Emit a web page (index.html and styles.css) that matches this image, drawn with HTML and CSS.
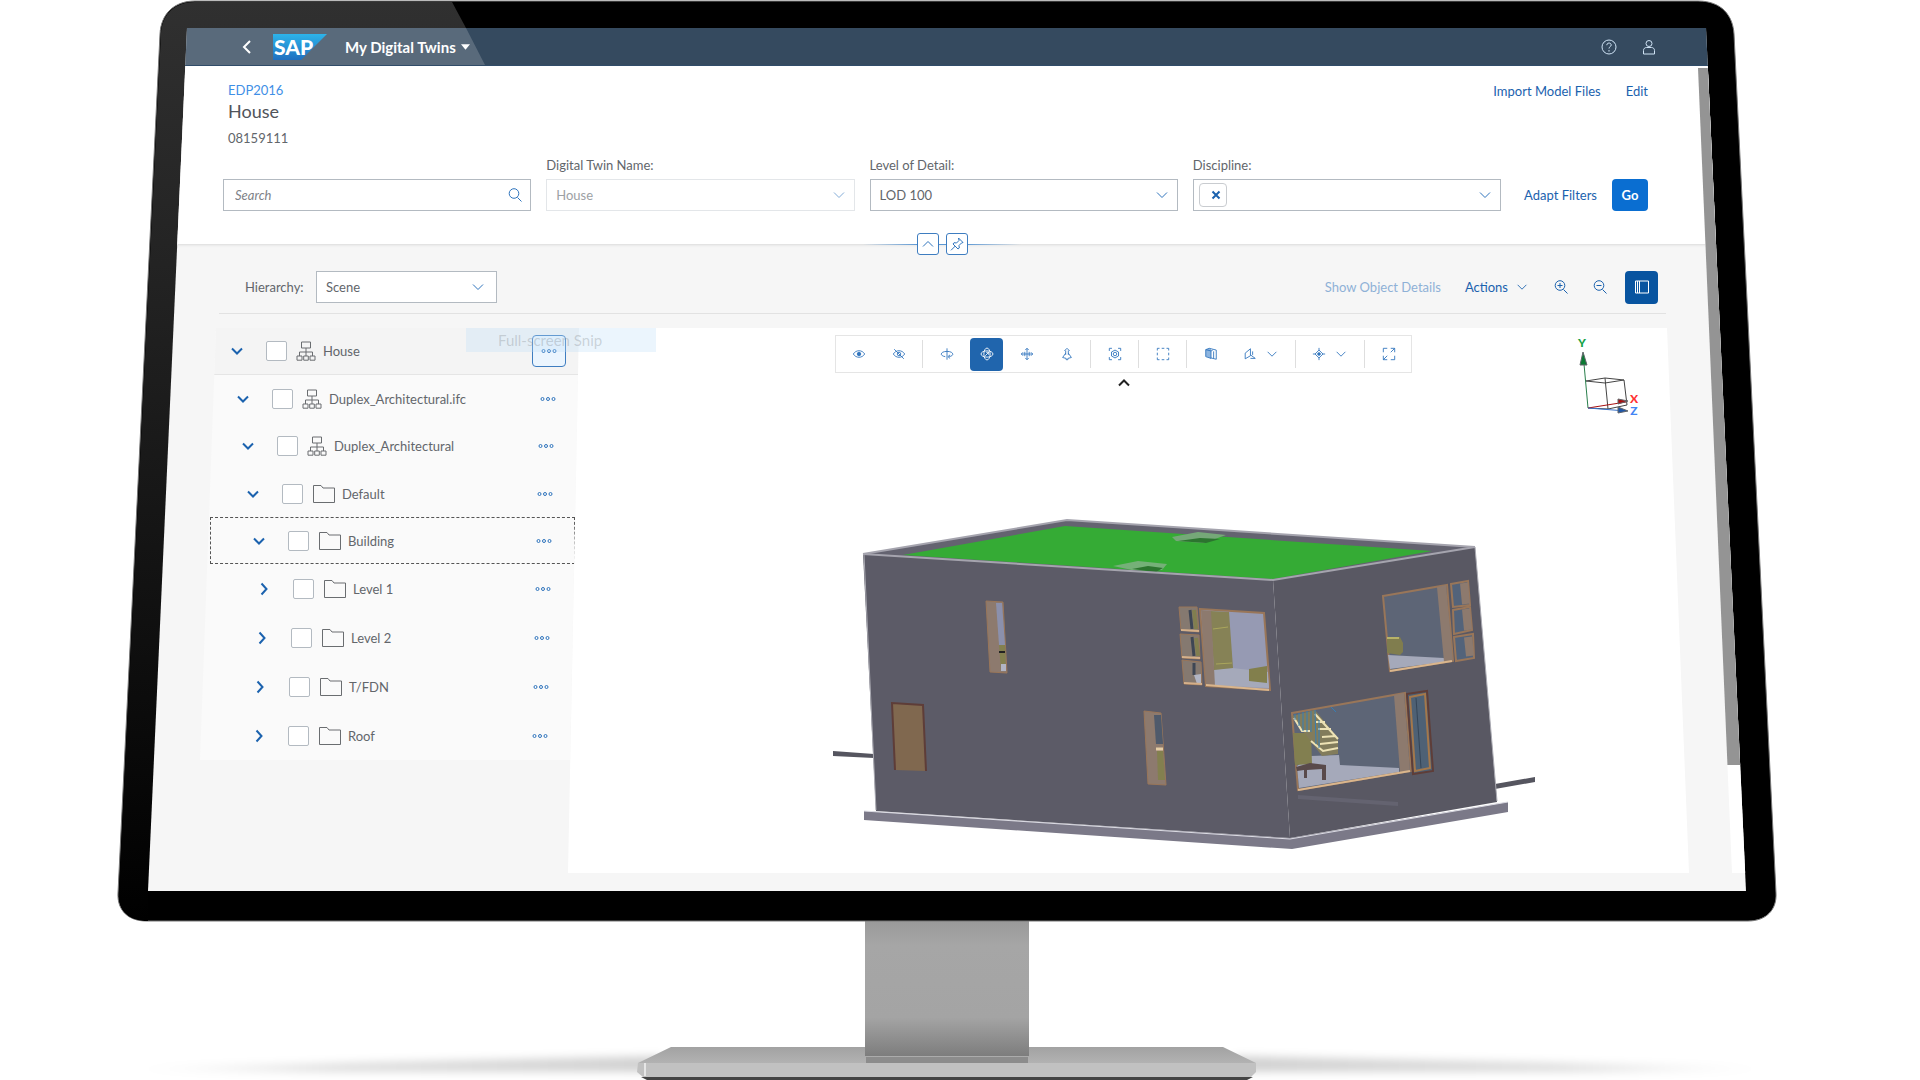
FILE: index.html
```html
<!DOCTYPE html>
<html lang="en">
<head>
<meta charset="utf-8">
<title>My Digital Twins</title>
<meta name="viewport" content="width=device-width, initial-scale=1">
<link rel="stylesheet" href="styles.css">
</head>
<body>
<svg class="symbols" aria-hidden="true">
  <symbol id="i-down" viewBox="0 0 16 16"><path d="M3 5.500l5 5 5-5"/></symbol>
  <symbol id="i-up" viewBox="0 0 16 16"><path d="M3 10.500l5-5 5 5"/></symbol>
  <symbol id="i-right" viewBox="0 0 16 16"><path d="M5.500 2.500l5 5.500-5 5.500"/></symbol>
  <symbol id="i-org" viewBox="0 0 20 20"><path d="M5.500 1h9v6h-9zM10 7v4M3.500 15v-4h13v4M10 11v4M1 15h5v4.200h-5zM7.700 15h4.600v4.200h-4.600zM14 15h5v4.200h-5z"/></symbol>
  <symbol id="i-folder" viewBox="0 0 24 20"><path d="M1.500 18.500V1.500h7.500l2 2.500h11.500v14.500z"/></symbol>
  <symbol id="i-dots" viewBox="0 0 16 6"><circle cx="2.500" cy="3" r="1.500"/><circle cx="8" cy="3" r="1.500"/><circle cx="13.500" cy="3" r="1.500"/></symbol>
  <symbol id="i-search" viewBox="0 0 16 16"><circle cx="7" cy="6.500" r="4.800"/><path d="M10.500 10.500l4 4"/></symbol>
</svg>

<div class="stage">
  <svg class="device" viewBox="0 0 1920 1080" preserveAspectRatio="none" aria-hidden="true">
    <defs>
      <linearGradient id="pillar" x1="0" y1="0" x2="0" y2="1"><stop offset="0" stop-color="#989898"/><stop offset=".2" stop-color="#a6a6a6"/><stop offset=".72" stop-color="#a4a4a4"/><stop offset="1" stop-color="#7d7d7d"/></linearGradient>
      <linearGradient id="foot" x1="0" y1="0" x2="0" y2="1"><stop offset="0" stop-color="#a2a2a2"/><stop offset="1" stop-color="#b2b2b2"/></linearGradient>
      <linearGradient id="gloss" x1="0" y1="0" x2="0" y2="1"><stop offset="0" stop-color="#303030"/><stop offset=".35" stop-color="#202020"/><stop offset="1" stop-color="#000"/></linearGradient>
      <linearGradient id="shadeL"><stop offset="0" stop-color="#000" stop-opacity="0"/><stop offset=".4" stop-color="#000" stop-opacity=".13"/><stop offset="1" stop-color="#000" stop-opacity=".18"/></linearGradient>
      <linearGradient id="shadeR"><stop offset="0" stop-color="#000" stop-opacity=".18"/><stop offset=".6" stop-color="#000" stop-opacity=".13"/><stop offset="1" stop-color="#000" stop-opacity="0"/></linearGradient>
      <filter id="soft" x="-10%" y="-60%" width="120%" height="220%"><feGaussianBlur stdDeviation="4"/></filter>
    </defs>
    <path d="M120 1069L380 1062L660 1056V1072H300z" fill="url(#shadeL)" filter="url(#soft)"/>
    <path d="M1780 1069L1520 1062L1235 1056V1072H1600z" fill="url(#shadeR)" filter="url(#soft)"/>
    <path d="M671 1047H1223L1256 1063H638z" fill="url(#foot)"/>
    <path d="M866 1057H1028V1063H866z" fill="#8c8c8c"/>
    <path d="M638 1063H1256V1072L1251 1077H643L637 1072z" fill="#c1c1c1"/>
    <path d="M645 1063V1076" stroke="#e6e6e6" stroke-width="2"/>
    <path d="M641 1077H1253L1247 1080H647z" fill="#444"/>
    <path d="M865 918H1029V1056H865z" fill="url(#pillar)"/>
    <path d="M195 1H1698C1722 1 1733 16 1734 34L1776 893C1777 910 1766 921 1748 921H146C129 921 117 911 118 893L160 34C161 14 174 1 195 1z" fill="#000" stroke="#777" stroke-width="1"/>
    <path d="M195 2H452L466 28V40H187L148 893V921C129 921 118 911 119 893L161 34C162 14 175 2 195 2z" fill="url(#gloss)"/>
  </svg>

  <main class="screen">
    <header class="shell">
      <button class="icon-btn back" aria-label="Back"><svg viewBox="0 0 12 16"><path d="M9 2L3 8l6 6"/></svg></button>
      <svg class="logo" viewBox="0 0 54 26" role="img" aria-label="SAP">
        <defs><linearGradient id="sap" x1="0" y1="0" x2="0" y2="1"><stop offset="0" stop-color="#2db4ea"/><stop offset="1" stop-color="#1f6fc0"/></linearGradient></defs>
        <path d="M0 0H54L28 26H0z" fill="url(#sap)"/>
        <text class="logo-text" x="1" y="21">SAP</text>
      </svg>
      <button class="app-title">My Digital Twins<svg viewBox="0 0 10 6"><path d="M0 0h10L5 6z"/></svg></button>
      <div class="spacer"></div>
      <button class="icon-btn" aria-label="Help"><svg viewBox="0 0 16 16"><circle cx="8" cy="8" r="7"/><path d="M5.800 6.200c0-3 4.500-2.800 4.400-.1 0 1.500-2.200 1.600-2.200 3.400M8 11v1.600"/></svg></button>
      <button class="icon-btn" aria-label="User"><svg viewBox="0 0 16 16"><circle cx="8" cy="4.500" r="3"/><path d="M2.500 15v-3.500c0-2 1.500-3 3-3h5c1.500 0 3 1 3 3V15z"/></svg></button>
    </header>

    <section class="object">
      <div class="object-top">
        <div class="titles">
          <a class="crumb" href="#">EDP2016</a>
          <h1>House</h1>
          <p>08159111</p>
        </div>
        <nav class="object-links"><a href="#">Import Model Files</a><a href="#">Edit</a></nav>
      </div>
      <form class="filters">
        <div class="field">
          <div class="box"><input type="search" placeholder="Search" aria-label="Search"><svg class="ico"><use href="#i-search"/></svg></div>
        </div>
        <div class="field muted">
          <label for="twin">Digital Twin Name:</label>
          <div class="box"><select id="twin" disabled><option>House</option></select><svg class="ico"><use href="#i-down"/></svg></div>
        </div>
        <div class="field">
          <label for="lod">Level of Detail:</label>
          <div class="box"><select id="lod"><option>LOD 100</option></select><svg class="ico"><use href="#i-down"/></svg></div>
        </div>
        <div class="field">
          <label for="disc">Discipline:</label>
          <div class="box"><button type="button" class="token" aria-label="Remove"><svg viewBox="0 0 10 10"><path d="M1.500 1.500l7 7M8.500 1.500l-7 7"/></svg></button><input id="disc" type="text"><svg class="ico"><use href="#i-down"/></svg></div>
        </div>
        <div class="filter-actions"><a href="#">Adapt Filters</a><button type="button" class="go">Go</button></div>
      </form>
      <div class="snap">
        <button aria-label="Collapse header"><svg><use href="#i-up"/></svg></button>
        <button aria-label="Pin header"><svg viewBox="0 0 16 16"><path d="M9.500 2l4.500 4.500-1.500.5-2.500 2.500.3 2.500-1.300 1L4 8l1-1.300 2.500.3L10 4.500zM6.300 10L2 14.300"/></svg></button>
      </div>
    </section>

    <section class="toolbar">
      <label for="hier">Hierarchy:</label>
      <div class="box hier"><select id="hier"><option>Scene</option></select><svg class="ico"><use href="#i-down"/></svg></div>
      <div class="spacer"></div>
      <button class="text-btn" disabled>Show Object Details</button>
      <button class="text-btn actions">Actions<svg class="small"><use href="#i-down"/></svg></button>
      <div class="zooms">
        <button class="zoom" aria-label="Zoom in"><svg viewBox="0 0 16 16"><circle cx="7" cy="6.500" r="4.800"/><path d="M10.500 10.500l4 4M7 4v5M4.500 6.500h5"/></svg></button>
        <button class="zoom" aria-label="Zoom out"><svg viewBox="0 0 16 16"><circle cx="7" cy="6.500" r="4.800"/><path d="M10.500 10.500l4 4M4.500 6.500h5"/></svg></button>
      </div>
      <button class="panel-btn" aria-label="Show panel"><svg viewBox="0 0 16 16"><path d="M1.500 2h13v12h-13zM5.500 2v12M3.500 2v12"/></svg></button>
    </section>

    <section class="content">
      <ul class="tree">
        <li><button class="tw" aria-label="Collapse"><svg><use href="#i-down"/></svg></button><input type="checkbox" id="n1"><svg class="org"><use href="#i-org"/></svg><label for="n1">House</label><button class="more active" aria-label="More"><svg><use href="#i-dots"/></svg></button></li>
        <li><button class="tw" aria-label="Collapse"><svg><use href="#i-down"/></svg></button><input type="checkbox" id="n2"><svg class="org"><use href="#i-org"/></svg><label for="n2">Duplex_Architectural.ifc</label><button class="more" aria-label="More"><svg><use href="#i-dots"/></svg></button></li>
        <li><button class="tw" aria-label="Collapse"><svg><use href="#i-down"/></svg></button><input type="checkbox" id="n3"><svg class="org"><use href="#i-org"/></svg><label for="n3">Duplex_Architectural</label><button class="more" aria-label="More"><svg><use href="#i-dots"/></svg></button></li>
        <li><button class="tw" aria-label="Collapse"><svg><use href="#i-down"/></svg></button><input type="checkbox" id="n4"><svg class="folder"><use href="#i-folder"/></svg><label for="n4">Default</label><button class="more" aria-label="More"><svg><use href="#i-dots"/></svg></button></li>
        <li class="focused"><button class="tw" aria-label="Collapse"><svg><use href="#i-down"/></svg></button><input type="checkbox" id="n5"><svg class="folder"><use href="#i-folder"/></svg><label for="n5">Building</label><button class="more" aria-label="More"><svg><use href="#i-dots"/></svg></button></li>
        <li><button class="tw" aria-label="Expand"><svg><use href="#i-right"/></svg></button><input type="checkbox" id="n6"><svg class="folder"><use href="#i-folder"/></svg><label for="n6">Level 1</label><button class="more" aria-label="More"><svg><use href="#i-dots"/></svg></button></li>
        <li><button class="tw" aria-label="Expand"><svg><use href="#i-right"/></svg></button><input type="checkbox" id="n7"><svg class="folder"><use href="#i-folder"/></svg><label for="n7">Level 2</label><button class="more" aria-label="More"><svg><use href="#i-dots"/></svg></button></li>
        <li><button class="tw" aria-label="Expand"><svg><use href="#i-right"/></svg></button><input type="checkbox" id="n8"><svg class="folder"><use href="#i-folder"/></svg><label for="n8">T/FDN</label><button class="more" aria-label="More"><svg><use href="#i-dots"/></svg></button></li>
        <li><button class="tw" aria-label="Expand"><svg><use href="#i-right"/></svg></button><input type="checkbox" id="n9"><svg class="folder"><use href="#i-folder"/></svg><label for="n9">Roof</label><button class="more" aria-label="More"><svg><use href="#i-dots"/></svg></button></li>
      </ul>

      <div class="viewer">
        <div class="tools" role="toolbar" aria-label="Viewer">
          <button aria-label="Show"><svg viewBox="0 0 16 16"><path d="M1.500 8c3-5 10-5 13 0-3 5-10 5-13 0z"/><circle cx="8" cy="8" r="2" class="solid"/></svg></button>
          <button aria-label="Hide"><svg viewBox="0 0 16 16"><path d="M1.500 8c3-5 10-5 13 0-3 5-10 5-13 0zM2.500 2.500l11 11"/><circle cx="8" cy="8" r="2"/></svg></button>
          <i class="sep"></i>
          <button aria-label="Turntable"><svg viewBox="0 0 16 16"><path d="M8 1.500v13M6 11C-1 10 .5 5 8 5s9 5 2.500 6M9 11l2.500-2M9 11l2.500 2"/></svg></button>
          <button class="on" aria-label="Orbit"><svg viewBox="0 0 16 16"><ellipse cx="8" cy="8" rx="6.800" ry="3.600"/><ellipse cx="8" cy="8" rx="3.600" ry="6.800"/><path d="M6 10l4-4M7 6h3v3"/></svg></button>
          <button aria-label="Pan"><svg viewBox="0 0 16 16"><path d="M8 1.500v13M1.500 8h13M6 3.500L8 1.500l2 2M6 12.500l2 2 2-2M3.500 6L1.500 8l2 2M12.500 6l2 2-2 2M5.500 5.500v5M10.500 5.500v5"/></svg></button>
          <button aria-label="Zoom"><svg viewBox="0 0 16 16"><path d="M6.500 9V4M9.500 9V4M5 4.500L8 1.500l3 3M6.500 7L3 12l4 1v1.500h2V13l4-1-3.500-5"/></svg></button>
          <i class="sep"></i>
          <button aria-label="Fit to view"><svg viewBox="0 0 16 16"><path d="M1.500 4.500v-3h3M11.500 1.500h3v3M14.500 11.500v3h-3M4.500 14.500h-3v-3M8 3.500l4 2.200v4.600l-4 2.200-4-2.200V5.700z"/><circle cx="8" cy="8" r="2"/></svg></button>
          <i class="sep"></i>
          <button aria-label="Select area"><svg viewBox="0 0 16 16"><path d="M1.500 4V1.500H4M6.500 1.500h3M12 1.500h2.500V4M14.500 6.500v3M14.500 12v2.500H12M9.500 14.500h-3M4 14.500H1.500V12M1.500 9.500v-3"/></svg></button>
          <i class="sep"></i>
          <button aria-label="Cross section"><svg viewBox="0 0 16 16"><path class="tint" d="M2 3l4-1.500 2 .5v11L2 10.500z"/><path d="M2 3l4-1.500L14 3.500v10.500l-6-1.500M8 4.500v8.500L2 11V3l6 1.500 2-1M11 5v8"/></svg></button>
          <button class="wide" aria-label="Measure"><svg viewBox="0 0 16 16"><path d="M2.500 13.500V7l6-5v8zM8.500 9l5.500 4H8.500M11 5v4"/></svg><svg class="small"><use href="#i-down"/></svg></button>
          <i class="sep"></i>
          <button class="wide" aria-label="Viewpoint"><svg viewBox="0 0 16 16"><path d="M8 1v3M8 12v3M1 8h3M12 8h3M8 3.500L12.500 8 8 12.500 3.500 8z"/><circle cx="8" cy="8" r="1.500" class="solid"/></svg><svg class="small"><use href="#i-down"/></svg></button>
          <i class="sep"></i>
          <button aria-label="Full screen"><svg viewBox="0 0 16 16"><path d="M1.500 6V1.500H6M10 1.500h4.500V6M14.500 10v4.500H10M6 14.500H1.500V10M10 6l4.500-4.500M1.500 14.500L6 10"/></svg></button>
        </div>
        <button class="fold" aria-label="Hide tools"><svg><use href="#i-up"/></svg></button>

        <svg class="axes" viewBox="1570 332 80 92" role="img" aria-label="Axes">
          <path d="M1586 381L1605 383 1624 380 1605 378zM1605 378L1608 409 1627 405 1624 380M1588 408L1608 409" fill="none" stroke="#444"/>
          <path d="M1584 364L1588 408" stroke="#2a7f4c" fill="none"/><path d="M1583 352L1580 365H1587z" fill="#0b7a33"/>
          <path d="M1588 408L1626 402" stroke="#a11"/><path d="M1628 401L1618 399V404z" fill="#a11"/>
          <path d="M1588 408L1626 411" stroke="#3a74cc"/><path d="M1628 411L1618 407V413z" fill="#1f57a8"/>
          <text x="1582" y="347" fill="#17a347">Y</text><text x="1634" y="403" fill="#f33">X</text><text x="1634" y="415" fill="#4285f4">Z</text>
        </svg>

        <svg class="model" viewBox="830 515 710 340" role="img" aria-label="House model">
          <path d="M833 751L874 754V758L833 756zM1495 784L1535 777V782L1495 789z" fill="#55555f"/>
          <path d="M864 811L1290 838 1508 802V812L1292 849 864 820z" fill="#7b7988"/>
          <path d="M864 811L1290 839 1508 802" fill="none" stroke="#dcdce4"/>
          <path d="M863 554L1067 520 1475 547 1273 580z" fill="#646370"/>
          <path d="M863 554L1067 520 1475 547" fill="none" stroke="#a5a4ae" stroke-width="2"/>
          <path d="M903 555L1065 526 1432 551 1273 579z" fill="#35ab35"/>
          <path d="M1172 537L1198 532 1226 535 1204 543 1176 541z" fill="#75a878"/><path d="M1178 541L1200 538 1220 539 1206 543z" fill="#2c742f"/>
          <path d="M1113 566L1138 561 1167 564 1162 570 1132 570z" fill="#75b078"/><path d="M1132 569L1148 566 1163 568 1156 572z" fill="#2c742f"/>
          <path d="M863 554L1273 580 1290 838 876 811z" fill="#5c5b67"/>
          <path d="M1273 580L1475 547 1497 802 1290 838z" fill="#595863"/>
          <path d="M863 554L1273 580 1475 547" fill="none" stroke="#a5a4ae" stroke-width="2"/>
          <path d="M864 555L876 810M1475 547L1497 801" stroke="#aaaab2" fill="none"/>
          <path d="M892 703L923 705 926 771 895 770z" fill="#80684f"/><path d="M895 770L892 703 923 705 926 771" fill="none" stroke="#5e3d38" stroke-width="2"/>
          <path d="M986 601L1003 602 1007 673 990 672z" fill="#8d7a6e" stroke="#997659"/>
          <path d="M996 603H1002L1005 645H999z" fill="#8b90ac"/><path d="M999 645H1005L1006 670H1001z" fill="#83804f"/><path d="M999 652H1005" stroke="#222" stroke-width="2"/><path d="M1001 664H1006V671H1001z" fill="#b1b5c4"/>
          <path d="M1144 711L1161 713 1166 785 1148 784z" fill="#8d7a6e" stroke="#997659"/>
          <path d="M1154 715H1161L1163 744H1156z" fill="#4f5a6b"/><path d="M1157 751H1163L1165 780H1158z" fill="#83804f"/><path d="M1156 749H1163" stroke="#e4cda5" stroke-width="3"/>
          <g stroke="#997659" fill="#857970">
            <path d="M1179 607H1197L1199 632 1181 630zM1180 634L1199 635 1200 659 1182 658zM1182 660L1201 662 1202 685 1184 684z"/>
          </g>
          <path d="M1190 610L1192 629M1192 637L1194 656M1194 663V675" stroke="#3e4654" stroke-width="3"/>
          <path d="M1194 610L1196 629M1196 638L1198 656" stroke="#817e4f" stroke-width="4"/><path d="M1194 675L1201 674V683L1197 684z" fill="#b1b5c4"/>
          <path d="M1181 630L1199 631M1182 657L1200 658M1184 683L1202 684" stroke="#d5b08a" stroke-width="2"/>
          <path d="M1200 609L1264 613 1270 690 1206 686z" fill="#969ab3" stroke="#997659" stroke-width="2"/>
          <path d="M1210 670L1232 668 1268 672 1269 688 1212 685z" fill="#a5a9ba"/>
          <path d="M1210 611L1229 612 1233 668 1214 670z" fill="#868256"/><path d="M1213 629L1228 627M1216 664L1232 663" stroke="#aaa65c"/>
          <path d="M1249 669L1267 666V683L1249 681z" fill="#827f4c"/>
          <path d="M1201 610L1211 611 1215 686 1206 685z" fill="#8d7a6e"/><path d="M1206 685L1269 690" stroke="#dab68d" stroke-width="2"/>
          <path d="M1383 596L1447 585 1453 661 1390 671z" fill="#5d6576" stroke="#997659" stroke-width="2"/>
          <path d="M1388 655L1444 658V662L1390 669z" fill="#a5a9ba"/><path d="M1387 637L1400 637 1403 643V652L1400 655 1387 653z" fill="#807d4e"/><path d="M1387 638H1399" stroke="#b7b268" stroke-width="2"/>
          <path d="M1437 587L1446 585 1453 661 1444 662z" fill="#8d7a6e"/><path d="M1390 671L1452 661" stroke="#dab68d" stroke-width="2"/>
          <g fill="#53637a" stroke="#997659" stroke-width="2"><path d="M1451 584L1468 581 1470 605 1453 607zM1453 610L1470 607 1472 630 1454 634zM1454 637L1473 634 1474 658 1456 661z"/></g>
          <path d="M1464 583L1466 604M1466 609L1468 630M1468 637L1470 656" stroke="#8d7a6e" stroke-width="8"/>
          <path d="M1292 713L1405 693 1411 771 1298 790z" fill="#5d6576" stroke="#997659" stroke-width="2"/>
          <path d="M1311 756L1339 755 1340 765 1399 768V772L1299 788 1297 766z" fill="#a5a9ba"/>
          <path d="M1293 733H1311L1312 764 1295 765z" fill="#827f50"/>
          <path d="M1292 716L1315 710 1338 738V754L1322 756 1303 731z" fill="#827c5c"/>
          <path d="M1294 718L1302 731 1310 731M1315 714L1338 739M1316 722L1325 722M1318 729H1331M1322 737L1336 736M1320 744L1338 742M1311 741L1323 751 1338 748" stroke="#ede2b5" stroke-width="2" fill="none"/>
          <path d="M1295 714V720M1299 713V726M1303 712V731M1307 711V732M1311 711V732M1315 710L1316 744M1319 720V748M1331 707L1336 712" stroke="#367eb5" fill="none"/>
          <path d="M1296 767L1310 763 1326 765V780H1322V769L1307 770V778H1304V770L1297 771z" fill="#594a4b"/>
          <path d="M1394 695L1404 693 1410 771 1400 772z" fill="#8d7a6e"/><path d="M1298 790L1410 771" stroke="#dab68d" stroke-width="2"/>
          <path d="M1407 694L1427 691 1433 771 1413 774z" fill="#4e6175" stroke="#5e3d38" stroke-width="2"/>
          <path d="M1410 697L1425 694 1430 768 1415 771z" fill="none" stroke="#a4784b" stroke-width="2"/><path d="M1416 698L1421 768" stroke="#354557"/>
          <path d="M1298 795L1398 802V806L1298 799z" fill="#646370"/>
        </svg>
      </div>
    </section>

    <div class="snip">Full-screen Snip</div>
    <div class="scroll-track"><div class="scroll-thumb"></div></div>
  </main>
</div>
</body>
</html>
```
FILE: styles.css
```css
* { box-sizing: border-box; }
body { margin: 0; background: #fff; color: #62666b; font: 13px/18px Lato, "Open Sans", sans-serif; }
button, input, select { font: inherit; color: inherit; margin: 0; padding: 0; border: 0; background: none; border-radius: 0; }
button { cursor: pointer; display: flex; align-items: center; justify-content: center; }
a { color: #1b62ae; text-decoration: none; }
svg { fill: none; stroke: currentColor; flex: none; }
svg text { stroke: none; }
.symbols { position: absolute; width: 0; height: 0; }
.spacer { flex: 1; }

.stage { position: relative; min-height: 100vh; padding: 28px 174px 189px 148px; overflow: hidden; }
.device { position: absolute; inset: 0; width: 100%; height: 100%; stroke: none; }
.screen { position: relative; background: #f6f6f6; clip-path: polygon(39px 0, calc(100% - 40px) 0, 100% 100%, 0 100%); }

/* shell bar */
.shell { position: relative; display: flex; align-items: center; height: 38px; padding: 0 85px 0 87px; background: #354a5f; border-bottom: 1px solid #22405f; color: #fff; }
.shell::before { content: ""; position: absolute; inset: 0; background: rgba(255, 255, 255, .18); clip-path: polygon(0 0, 318px 0, 337px 100%, 0 100%); }
.shell > * { position: relative; }
.icon-btn { width: 24px; height: 24px; margin-left: 16px; color: #cfe3f5; }
.icon-btn svg { width: 16px; height: 16px; }
.icon-btn.back { margin: 0 14px 0 0; color: #fff; stroke-width: 2; }
.logo { width: 54px; height: 26px; margin-right: 18px; stroke: none; }
.logo-text { font: 900 21px Lato, sans-serif; fill: #fff; }
.app-title { gap: 5px; font-weight: 700; font-size: 15px; }
.app-title svg { width: 9px; height: 6px; fill: #fff; stroke: none; }

/* object header */
.object { position: relative; padding: 15px 98px 33px 75px; background: #fff; border-bottom: 1px solid #e3e3e3; box-shadow: 0 1px 2px #e8e8e8; }
.object-top { display: flex; justify-content: space-between; padding-left: 5px; }
.titles { display: flex; flex-direction: column; }
.crumb { color: #3f8fe6; }
h1 { margin: 0 0 6px; font-size: 18px; line-height: 24px; font-weight: 400; color: #50545a; }
p { margin: 0 0 9px; }
.object-links { display: flex; gap: 25px; padding-top: 1px; }
.filters { display: grid; grid-template-columns: repeat(4, 1fr) auto; column-gap: 15px; align-items: end; }
.field { display: flex; flex-direction: column; gap: 5px; min-width: 0; }
.box { display: flex; align-items: center; height: 32px; padding: 0 7px 0 9px; border: 1px solid #b3bac1; background: #fff; }
.box input, .box select { flex: 1; min-width: 0; height: 28px; appearance: none; outline: 0; opacity: 1; }
.box input[type="search"] { padding-left: 2px; }
.box input::placeholder { font-style: italic; color: #7e8287; opacity: 1; }
.ico { width: 16px; height: 16px; color: #2f74bd; }
.muted .box { border-color: #e3e6e9; color: #9da1a5; }
.muted .ico { opacity: .6; }
.token { width: 28px; height: 24px; margin-left: -4px; border: 1px solid #c9ccd0; border-radius: 4px; padding-left: 6px; color: #1b62ae; }
.token svg { width: 10px; height: 10px; stroke-width: 2; }
.filter-actions { display: flex; align-items: center; gap: 15px; margin-left: 8px; }
.go { width: 36px; height: 32px; border-radius: 4px; background: #0a6ed1; color: #fff; font-weight: 700; }
.snap { position: absolute; left: 715px; bottom: -11px; width: 158px; display: flex; justify-content: center; gap: 7px; background: linear-gradient(90deg, transparent, #5c98d4 35%, #5c98d4 65%, transparent) center / 100% 1px no-repeat; }
.snap button { width: 22px; height: 22px; border: 1px solid #3e7dc0; border-radius: 3px; background: #fff; color: #2f74bd; }
.snap svg { width: 16px; height: 16px; }

/* page toolbar */
.toolbar { display: flex; align-items: center; height: 69px; margin: 0 80px 14px 71px; padding: 22px 8px 6px 26px; border-bottom: 1px solid #e2e2e2; color: #1b62ae; }
.toolbar label { width: 71px; color: #62666b; }
.hier { width: 181px; padding-right: 10px; color: #62666b; }
.text-btn { margin-right: 24px; }
.text-btn:disabled { color: #8fb1d6; }
.text-btn.actions { gap: 7px; }
.small { width: 14px; height: 14px; }
.zooms { display: flex; gap: 23px; margin-right: 17px; }
.zoom { width: 16px; height: 24px; }
.zoom svg { width: 16px; height: 16px; }
.panel-btn { width: 33px; height: 33px; border-radius: 4px; background: #0854a0; color: #fff; }
.panel-btn svg { width: 16px; height: 16px; }

/* hierarchy tree */
.content { display: flex; align-items: flex-start; padding: 0 57px 18px 52px; }
.tree { width: 379px; margin: 0 -11px 0 0; padding: 0; list-style: none; background: #fafafa; clip-path: polygon(16px 0, 100% 0, calc(100% - 9px) 100%, 0 100%); }
.tree li { display: flex; align-items: center; height: 47px; }
.tree li:nth-child(n+6) { height: 49px; }
.tree li:nth-child(3) { height: 48px; }
.tree li:nth-child(1) { padding: 0 13px 0 29px; background: #f4f4f4; border-bottom: 1px solid #e5e5e5; }
.tree li:nth-child(2) { padding: 0 14px 0 35px; }
.tree li:nth-child(3) { padding: 0 16px 0 40px; }
.tree li:nth-child(4) { padding: 0 17px 0 45px; }
.tree li:nth-child(5) { padding: 0 13px 0 40px; margin: 0 4px 0 10px; border: 1px dashed #555; }
.tree li:nth-child(6) { padding: 0 19px 0 56px; }
.tree li:nth-child(7) { padding: 0 20px 0 54px; }
.tree li:nth-child(8) { padding: 0 21px 0 52px; }
.tree li:nth-child(9) { padding: 0 22px 0 51px; }
.tree label { flex: 1; }
.tw { width: 16px; height: 16px; margin-right: 21px; color: #1b62ae; }
.tw svg { width: 16px; height: 16px; stroke-width: 2; }
.tree input { appearance: none; width: 21px; height: 20px; margin-right: 9px; border: 1px solid #b3bac1; border-radius: 2px; background: #fff; }
.org { width: 20px; height: 20px; margin-right: 7px; color: #6a6d70; }
.folder { width: 24px; height: 20px; margin-right: 6px; color: #6a6d70; }
.more { width: 34px; height: 32px; color: #2f74bd; }
.more svg { width: 16px; height: 6px; }
.more.active { border: 1px solid #3e7dc0; border-radius: 4px; background: #ebf5fe; }

/* 3D viewer */
.viewer { position: relative; flex: 1; min-width: 0; min-height: 545px; padding-top: 7px; background: #fff; clip-path: polygon(11px 0, calc(100% - 22px) 0, 100% 100%, 0 100%); }
.tools { display: flex; align-items: center; gap: 7px; width: max-content; height: 38px; margin: 0 auto; padding: 0 6px; border: 1px solid #e5e5e5; }
.viewer .tools, .fold { position: relative; right: 5px; }
.tools button { width: 33px; height: 33px; border-radius: 4px; color: #2f74bd; }
.tools button.on { background: #2065ad; color: #fff; }
.tools svg { width: 14px; height: 14px; }
.tools button.wide { width: 54px; gap: 8px; }
.tools .solid { fill: currentColor; }
.tools .tint { fill: #8db5e0; stroke: none; }
.sep { width: 1px; height: 28px; background: #dedede; }
.fold { width: 24px; height: 20px; margin: 0 auto; color: #222; }
.fold svg { width: 16px; height: 16px; stroke-width: 2; }
.axes { position: absolute; top: 4px; right: 39px; width: 80px; height: 92px; stroke-width: 1; }
.axes text { font: 900 12px Lato, sans-serif; text-anchor: middle; }
.model { display: block; width: 710px; max-width: 100%; height: 340px; margin: 122px 0 0 262px; stroke: none; }

/* overlays */
.snip { position: absolute; left: 318px; top: 300px; width: 190px; height: 24px; padding-left: 32px; line-height: 25px; font-size: 15px; color: rgba(120, 125, 130, .3); background: rgba(190, 222, 250, .3); }
.scroll-track { position: absolute; top: 40px; right: 0; bottom: 18px; width: 48px; background: #fff; clip-path: polygon(0 0, 100% 0, 100% 100%, 34px 100%); }
.scroll-thumb { height: 697px; background: #949494; }
```
